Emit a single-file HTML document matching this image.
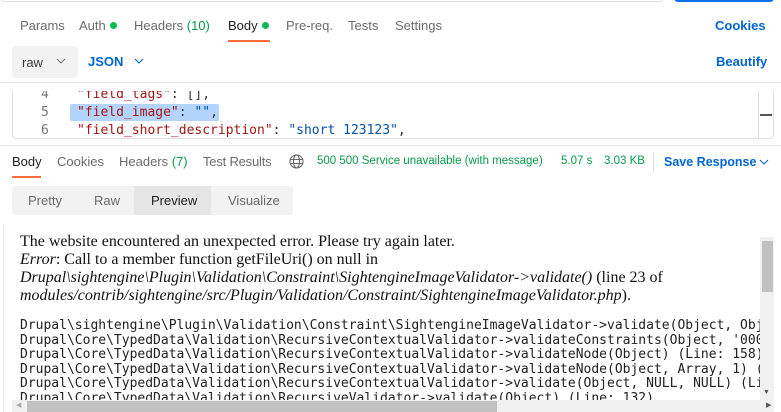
<!DOCTYPE html>
<html><head><meta charset="utf-8"><style>
*{margin:0;padding:0;box-sizing:border-box}
body{width:781px;height:412px;overflow:hidden;background:#fff;font-family:"Liberation Sans",sans-serif;position:relative;color:#6b6b6b}
.a{position:absolute;white-space:nowrap}
.t{font-size:13px}
.dot{display:inline-block;width:7px;height:7px;border-radius:50%;background:#0cbb52;margin-left:4px;vertical-align:1px}
.blue{color:#0265d2;font-weight:bold}
.mono{font-family:"DejaVu Sans Mono",monospace}
pre.a{font-family:"DejaVu Sans Mono",monospace;font-size:13px;line-height:14.5px;color:#212121;white-space:pre}
.serif{font-family:"Liberation Serif",serif;font-size:16px;line-height:18px;color:#111}
</style></head><body>
<div class="a" style="left:0;top:-10px;width:664px;height:12px;border:1px solid #e0e0e0;border-radius:4px"></div>
<div class="a" style="left:674px;top:-10px;width:100px;height:12px;background:#0a72e8;border-radius:4px"></div>

<div class="a t" style="left:20px;top:18px">Params</div>
<div class="a t" style="left:79px;top:18px">Auth<span class="dot"></span></div>
<div class="a t" style="left:134px;top:18px">Headers <span style="color:#0b9a4a">(10)</span></div>
<div class="a t" style="left:228px;top:18px;color:#212121">Body<span class="dot"></span></div>
<div class="a" style="left:228px;top:40px;width:42px;height:2px;background:#ff6c37"></div>
<div class="a t" style="left:286px;top:18px">Pre-req.</div>
<div class="a t" style="left:348px;top:18px">Tests</div>
<div class="a t" style="left:395px;top:18px">Settings</div>
<div class="a t blue" style="left:715px;top:18px">Cookies</div>

<div class="a" style="left:12px;top:46px;width:66px;height:32px;background:#f2f2f2;border-radius:4px"></div>
<div class="a t" style="left:22px;top:55px;color:#3a3a3a">raw</div>
<svg class="a" style="left:56px;top:58px" width="10" height="6" viewBox="0 0 10 6" fill="none" stroke="#777" stroke-width="1.1"><path d="M1 1l4 4 4-4"/></svg>
<div class="a t blue" style="left:88px;top:54px">JSON</div>
<svg class="a" style="left:134px;top:58px" width="10" height="6" viewBox="0 0 10 6" fill="none" stroke="#0265d2" stroke-width="1.1"><path d="M1 1l4 4 4-4"/></svg>
<div class="a t blue" style="left:716px;top:54px">Beautify</div>
<div class="a" style="left:0;top:82px;width:781px;height:1px;background:#e4e4e4"></div>

<div class="a" style="left:12px;top:91px;width:762px;height:48px;border:1px solid #e0e0e0;border-top:none;border-radius:0 0 4px 4px;overflow:hidden">
 <div class="a" style="left:745px;top:0;width:1px;height:48px;background:#ddd"></div>
 <div class="a" style="left:747px;top:23px;width:12px;height:2px;background:#555"></div>
 <div class="a mono" style="left:28px;top:-4px;font-size:13px;color:#777">4</div>
 <div class="a mono" style="left:28px;top:14px;font-size:13px;color:#777">5</div>
 <div class="a mono" style="left:28px;top:32px;font-size:13px;color:#777">6</div>
 <div class="a" style="left:57px;top:13px;width:149px;height:17px;background:#b3d4fc;border-radius:2px"></div>
 <div class="a mono" style="left:64px;top:-4px;font-size:13px;color:#a31515">"field_tags"<span style="color:#333">: [],</span></div>
 <div class="a mono" style="left:64px;top:14px;font-size:13px;color:#a31515">"field_image"<span style="color:#333">: </span><span style="color:#0451a5">""</span><span style="color:#333">,</span></div>
 <div class="a mono" style="left:64px;top:32px;font-size:13px;color:#a31515">"field_short_description"<span style="color:#333">: </span><span style="color:#0451a5">"short 123123"</span><span style="color:#333">,</span></div>
</div>
<div class="a" style="left:0;top:145px;width:781px;height:1px;background:#e4e4e4"></div>

<div class="a t" style="left:12px;top:154px;color:#212121">Body</div>
<div class="a" style="left:12px;top:176px;width:29px;height:2px;background:#ff6c37"></div>
<div class="a t" style="left:57px;top:154px">Cookies</div>
<div class="a t" style="left:119px;top:154px">Headers <span style="color:#0b9a4a">(7)</span></div>
<div class="a t" style="left:203px;top:154px;letter-spacing:-0.2px">Test Results</div>
<svg class="a" style="left:289px;top:154px" width="15" height="15" viewBox="0 0 15 15" fill="none" stroke="#666" stroke-width="1.1"><circle cx="7.5" cy="7.5" r="6.5"/><ellipse cx="7.5" cy="7.5" rx="3" ry="6.5"/><path d="M1 5.5h13M1 9.5h13"/></svg>
<div class="a" style="left:317px;top:155px;font-size:11.5px;color:#0b9a4a">500 500 Service unavailable (with message)</div>
<div class="a" style="left:561px;top:155px;font-size:11.5px;color:#0b9a4a">5.07 s</div>
<div class="a" style="left:604px;top:155px;font-size:11.5px;color:#0b9a4a">3.03 KB</div>
<div class="a" style="left:653px;top:152px;width:1px;height:20px;background:#e0e0e0"></div>
<div class="a blue" style="left:664px;top:155px;font-size:12.5px">Save Response</div>
<svg class="a" style="left:759px;top:159px" width="10" height="6" viewBox="0 0 10 6" fill="none" stroke="#0265d2" stroke-width="1.1"><path d="M1 1l4 4 4-4"/></svg>

<div class="a" style="left:12px;top:186px;width:281px;height:29px;background:#f2f2f2;border-radius:4px"></div>
<div class="a" style="left:134px;top:186px;width:77px;height:29px;background:#e6e6e6"></div>
<div class="a t" style="left:28px;top:193px">Pretty</div>
<div class="a t" style="left:94px;top:193px">Raw</div>
<div class="a t" style="left:151px;top:193px;color:#212121">Preview</div>
<div class="a t" style="left:228px;top:193px">Visualize</div>

<div class="a" style="left:3px;top:224px;width:1px;height:188px;background:#e8e8e8"></div>
<div class="a" style="left:0;top:224px;width:760px;height:176px;overflow:hidden">
 <div class="a serif" style="left:20px;top:9px">The website encountered an unexpected error. Please try again later.<br><i>Error</i>: Call to a member function getFileUri() on null in<br><i>Drupal\sightengine\Plugin\Validation\Constraint\SightengineImageValidator-&gt;validate()</i> (line 23 of<br><i>modules/contrib/sightengine/src/Plugin/Validation/Constraint/SightengineImageValidator.php</i>).</div>
<pre class="a" style="left:20px;top:95px">Drupal\sightengine\Plugin\Validation\Constraint\SightengineImageValidator-&gt;validate(Object, Object)
Drupal\Core\TypedData\Validation\RecursiveContextualValidator-&gt;validateConstraints(Object, '000
Drupal\Core\TypedData\Validation\RecursiveContextualValidator-&gt;validateNode(Object) (Line: 158)
Drupal\Core\TypedData\Validation\RecursiveContextualValidator-&gt;validateNode(Object, Array, 1) (
Drupal\Core\TypedData\Validation\RecursiveContextualValidator-&gt;validate(Object, NULL, NULL) (Li
Drupal\Core\TypedData\Validation\RecursiveValidator-&gt;validate(Object) (Line: 132)</pre>
</div>
<div class="a" style="left:760px;top:237px;width:14px;height:163px;background:#f1f1f1"></div>
<div class="a" style="left:763px;top:240px;font-size:7px;color:#555">&#9650;</div>
<div class="a" style="left:762px;top:241px;width:11px;height:51px;background:#c1c1c1"></div>
<div class="a" style="left:763px;top:389px;font-size:7px;color:#555">&#9660;</div>
<div class="a" style="left:12px;top:400px;width:762px;height:12px;background:#f1f1f1"></div>
<div class="a" style="left:16px;top:401px;font-size:7px;color:#aaa">&#9664;</div>
<div class="a" style="left:27px;top:401px;width:470px;height:11px;background:#c1c1c1"></div>
<div class="a" style="left:766px;top:401px;font-size:7px;color:#555">&#9654;</div>
</body></html>
